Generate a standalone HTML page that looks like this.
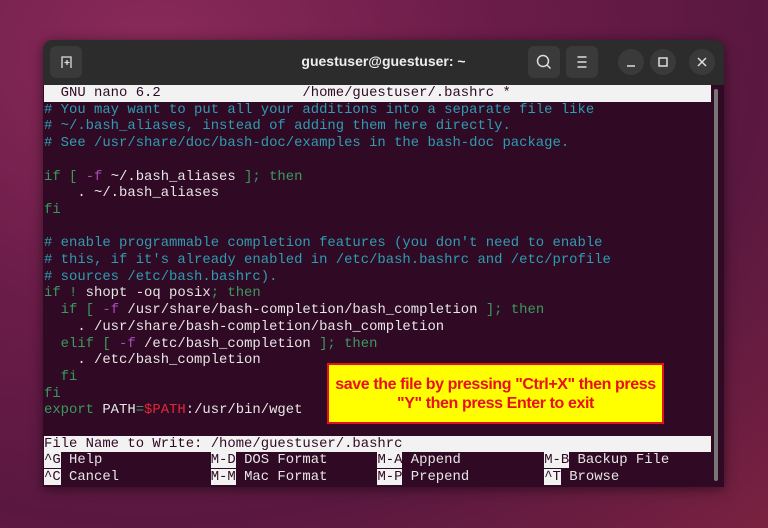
<!DOCTYPE html>
<html><head><meta charset="utf-8"><style>
*{margin:0;padding:0;box-sizing:border-box}
body{width:768px;height:528px;overflow:hidden;position:relative;
background:radial-gradient(ellipse at 20% 10%,#8a2a5a 0%,#6a1c48 40%,#5a1840 70%,#7a2240 100%);font-family:"Liberation Sans",sans-serif}
.win{position:absolute;left:43px;top:40px;width:681px;height:447px;background:#300a24;border-radius:10px 10px 0 0;overflow:hidden;box-shadow:0 2px 12px rgba(0,0,0,.5)}
.tb{position:absolute;left:0;top:0;width:681px;height:45px;background:#2c2c2c}
.btn{position:absolute;top:6px;width:32px;height:32px;background:#3a3a3a;border-radius:6px}
.circ{position:absolute;top:9px;width:26px;height:26px;border-radius:50%;background:#3a3a3a}
.title{position:absolute;left:0;width:681px;top:13px;text-align:center;color:#eee;font-weight:bold;font-size:14px}
.term{position:absolute;left:1px;top:45px;font-family:"Liberation Mono",monospace;font-size:13.9px;line-height:16.7px;color:#e6e6e6;white-space:pre}
.hl{background:#f2f2f2;color:#300a24;width:667px;display:block}
.c{color:#2e9db2}.g{color:#3a9a5e}.p{color:#a94bbd}.r{color:#e02838}
.k{background:#f2f2f2;color:#300a24}
.sb{position:absolute;left:671px;top:49px;width:4px;height:392px;background:#777;border-radius:2px}
.note{position:absolute;left:327px;top:363px;width:337px;height:61px;background:#ffff00;border:2px solid #e8101a;color:#e8101a;font-family:"Liberation Sans Narrow","Liberation Sans",sans-serif;font-weight:bold;font-size:16px;text-align:center;line-height:19px;padding-top:10px;letter-spacing:-0.4px}
</style></head><body>
<div class="win">
<div class="tb">
<div class="btn" style="left:7px"><svg width="32" height="32"><path d="M12 22V11h9v11M14.5 16.5h5M17 14v5" stroke="#ddd" stroke-width="1.3" fill="none"/></svg></div>
<div class="title">guestuser@guestuser: ~</div>
<div class="btn" style="left:485px"><svg width="32" height="32"><circle cx="15" cy="15" r="5.5" stroke="#ddd" stroke-width="1.5" fill="none"/><path d="M19 19l3.5 3.5" stroke="#ddd" stroke-width="1.5"/></svg></div>
<div class="btn" style="left:523px"><svg width="32" height="32"><path d="M11.5 11h9M11.5 16h9M11.5 21h9" stroke="#ddd" stroke-width="1.4"/></svg></div>
<div class="circ" style="left:575px"><svg width="26" height="26"><path d="M9 17h8" stroke="#ddd" stroke-width="1.5"/></svg></div>
<div class="circ" style="left:607px"><svg width="26" height="26"><rect x="9" y="9" width="8" height="8" stroke="#ddd" stroke-width="1.5" fill="none"/></svg></div>
<div class="circ" style="left:646px"><svg width="26" height="26"><path d="M9 9l8 8M17 9l-8 8" stroke="#ddd" stroke-width="1.5"/></svg></div>
</div>
<div class="sb"></div>
<div class="term"><span class="hl">  GNU nano 6.2                 /home/guestuser/.bashrc *                      </span><span class="c"># You may want to put all your additions into a separate file like</span>
<span class="c"># ~/.bash_aliases, instead of adding them here directly.</span>
<span class="c"># See /usr/share/doc/bash-doc/examples in the bash-doc package.</span>

<span class="g">if [ </span><span class="p">-f</span> ~/.bash_aliases <span class="g">]; then</span>
    . ~/.bash_aliases
<span class="g">fi</span>

<span class="c"># enable programmable completion features (you don't need to enable</span>
<span class="c"># this, if it's already enabled in /etc/bash.bashrc and /etc/profile</span>
<span class="c"># sources /etc/bash.bashrc).</span>
<span class="g">if !</span> shopt -oq posix<span class="g">; then</span>
  <span class="g">if [ </span><span class="p">-f</span> /usr/share/bash-completion/bash_completion <span class="g">]; then</span>
    . /usr/share/bash-completion/bash_completion
  <span class="g">elif [ </span><span class="p">-f</span> /etc/bash_completion <span class="g">]; then</span>
    . /etc/bash_completion
  <span class="g">fi</span>
<span class="g">fi</span>
<span class="g">export</span> PATH<span class="g">=</span><span class="r">$PATH</span>:/usr/bin/wget

<span class="hl">File Name to Write: /home/guestuser/.bashrc                                     </span><span class="k">^G</span> Help             <span class="k">M-D</span> DOS Format      <span class="k">M-A</span> Append          <span class="k">M-B</span> Backup File
<span class="k">^C</span> Cancel           <span class="k">M-M</span> Mac Format      <span class="k">M-P</span> Prepend         <span class="k">^T</span> Browse</div>
</div>
<div class="note">save the file by pressing "Ctrl+X" then press<br>"Y" then press Enter to exit</div>
</body></html>
